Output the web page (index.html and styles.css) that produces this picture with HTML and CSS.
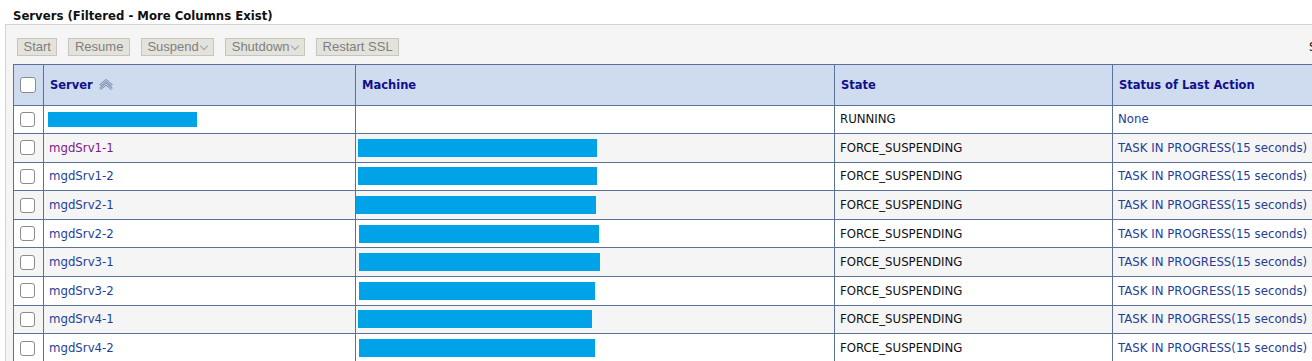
FILE: index.html
```html
<html><head>
<link rel="stylesheet" href="styles.css">
</head>
<body>
  <h2 class="title">Servers (Filtered - More Columns Exist)</h2>

  <div class="panel">
    <div class="toolbar">
      <div class="actions">
        <button class="btn" disabled>Start</button>
        <button class="btn" disabled>Resume</button>
        <button class="btn" disabled>Suspend <span class="caret"></span></button>
        <button class="btn" disabled>Shutdown <span class="caret"></span></button>
        <button class="btn" disabled>Restart SSL</button>
      </div>
      <div class="paging">Showing 1 to 9 of 9 &nbsp; Previous | Next</div>
    </div>

    <table class="grid">
      <colgroup>
        <col class="c-check">
        <col class="c-server">
        <col class="c-machine">
        <col class="c-state">
        <col class="c-status">
      </colgroup>
      <thead>
        <tr>
          <th class="check"><span class="cb cb-head"></span></th>
          <th>Server <svg class="sort" width="16" height="11" viewBox="0 0 16 11"><path d="M2 6.5 L8 1.5 L14 6.5" fill="none" stroke="#7b8db2" stroke-width="2.4"/><path d="M2 10 L8 5 L14 10" fill="none" stroke="#7b8db2" stroke-width="2.4"/><path d="M2 6.5 L8 1.5 L14 6.5" fill="none" stroke="#dde4f0" stroke-width="0.8"/><path d="M2 10 L8 5 L14 10" fill="none" stroke="#dde4f0" stroke-width="0.8"/></svg></th>
          <th>Machine</th>
          <th>State</th>
          <th>Status of Last Action</th>
        </tr>
      </thead>
      <tbody>
        <tr>
          <td class="check"><span class="cb"></span></td>
          <td class="server"><span class="mask mask-name"></span></td>
          <td class="machine"></td>
          <td class="state">RUNNING</td>
          <td class="status">None</td>
        </tr>
        <tr>
          <td class="check"><span class="cb"></span></td>
          <td class="server"><a class="visited">mgdSrv1-1</a></td>
          <td class="machine"><span class="mask" style="width:239px"></span></td>
          <td class="state">FORCE_SUSPENDING</td>
          <td class="status">TASK IN PROGRESS(15 seconds)</td>
        </tr>
        <tr>
          <td class="check"><span class="cb"></span></td>
          <td class="server"><a>mgdSrv1-2</a></td>
          <td class="machine"><span class="mask" style="width:239px"></span></td>
          <td class="state">FORCE_SUSPENDING</td>
          <td class="status">TASK IN PROGRESS(15 seconds)</td>
        </tr>
        <tr>
          <td class="check"><span class="cb"></span></td>
          <td class="server"><a>mgdSrv2-1</a></td>
          <td class="machine"><span class="mask" style="width:240px;margin-left:-2px"></span></td>
          <td class="state">FORCE_SUSPENDING</td>
          <td class="status">TASK IN PROGRESS(15 seconds)</td>
        </tr>
        <tr>
          <td class="check"><span class="cb"></span></td>
          <td class="server"><a>mgdSrv2-2</a></td>
          <td class="machine"><span class="mask" style="width:240px;margin-left:1px"></span></td>
          <td class="state">FORCE_SUSPENDING</td>
          <td class="status">TASK IN PROGRESS(15 seconds)</td>
        </tr>
        <tr>
          <td class="check"><span class="cb"></span></td>
          <td class="server"><a>mgdSrv3-1</a></td>
          <td class="machine"><span class="mask" style="width:241px;margin-left:1px"></span></td>
          <td class="state">FORCE_SUSPENDING</td>
          <td class="status">TASK IN PROGRESS(15 seconds)</td>
        </tr>
        <tr>
          <td class="check"><span class="cb"></span></td>
          <td class="server"><a>mgdSrv3-2</a></td>
          <td class="machine"><span class="mask" style="width:236px;margin-left:1px"></span></td>
          <td class="state">FORCE_SUSPENDING</td>
          <td class="status">TASK IN PROGRESS(15 seconds)</td>
        </tr>
        <tr>
          <td class="check"><span class="cb"></span></td>
          <td class="server"><a>mgdSrv4-1</a></td>
          <td class="machine"><span class="mask" style="width:234px"></span></td>
          <td class="state">FORCE_SUSPENDING</td>
          <td class="status">TASK IN PROGRESS(15 seconds)</td>
        </tr>
        <tr>
          <td class="check"><span class="cb"></span></td>
          <td class="server"><a>mgdSrv4-2</a></td>
          <td class="machine"><span class="mask" style="width:236px;margin-left:1px"></span></td>
          <td class="state">FORCE_SUSPENDING</td>
          <td class="status">TASK IN PROGRESS(15 seconds)</td>
        </tr>
      </tbody>
    </table>
  </div>
</body></html>
```

FILE: styles.css
```css
:root {
  --grid-line: #5b7198;
  --head-bg: #cfdbee;
  --head-text: #10108c;
  --link: #1d3f96;
  --visited: #7d1a86;
  --mask: #00a2e8;
  --panel-bg: #f5f5f5;
  --panel-line: #d3d3d3;
}

html, body {
  margin: 0;
  overflow: hidden;
  background: #ffffff;
}

body {
  font-family: "DejaVu Sans", Verdana, sans-serif;
  color: #111111;
}

.title {
  margin: 0;
  padding: 8px 0 0 13px;
  height: 16px;
  font-size: 11.7px;
  line-height: 16px;
  font-weight: bold;
  color: #111111;
  white-space: nowrap;
}

.panel {
  margin-left: 5px;
  width: 1600px;
  border-top: 1px solid var(--panel-line);
  border-left: 1px solid var(--panel-line);
  background: var(--panel-bg);
  padding: 13px 0 0 7px;
}

.toolbar {
  display: grid;
  grid-template-columns: 1292px auto;
  align-items: center;
  padding-left: 4px;
  margin-bottom: 8px;
}

.actions {
  display: flex;
  gap: 11px;
}

.btn {
  font-family: "Liberation Sans", Arial, sans-serif;
  font-size: 13px;
  line-height: 16px;
  height: 18px;
  padding: 0 5.5px;
  margin: 0;
  background: #e3e3dc;
  border: 1px solid #c6c6be;
  border-radius: 0;
  color: #7f7f7f;
  display: flex;
  align-items: center;
  gap: 1px;
}

.caret {
  display: inline-block;
  width: 5px;
  height: 5px;
  border-right: 1.5px solid #a0a0a0;
  border-bottom: 1.5px solid #a0a0a0;
  transform: rotate(45deg);
  margin: -3px 1px 0 1px;
}

.paging {
  font-size: 11.75px;
  color: #111111;
  white-space: nowrap;
}

.grid {
  border-collapse: collapse;
  table-layout: fixed;
  width: 1400px;
  background: #ffffff;
  border: 1px solid var(--grid-line);
}

.c-check { width: 30px; }
.c-server { width: 312px; }
.c-machine { width: 479px; }
.c-state { width: 278px; }
.c-status { width: 301px; }

.grid th,
.grid td {
  border: 1px solid var(--grid-line);
  text-align: left;
  vertical-align: middle;
  white-space: nowrap;
  overflow: hidden;
}

.grid th {
  height: 40.5px;
  padding: 0 0 0 6px;
  background: var(--head-bg);
  color: var(--head-text);
  font-size: 11.5px;
  font-weight: bold;
}

.grid td {
  height: 28.6px;
  padding: 0 0 0 5px;
  font-size: 11.75px;
  line-height: 14px;
}

.grid tbody tr:nth-child(even) td {
  background: var(--panel-bg);
}

.grid th.check,
.grid td.check {
  padding: 0 0 0 6px;
}

.cb {
  display: block;
  width: 15px;
  height: 15px;
  box-sizing: border-box;
  border: 1.5px solid #8c8c8c;
  border-radius: 3px;
  background: #ffffff;
}

.cb-head {
  width: 16px;
  height: 16px;
  margin-top: 1px;
}

.sort {
  vertical-align: -1px;
  margin-left: 1px;
}

.grid a {
  color: var(--link);
  text-decoration: none;
}

.grid a.visited {
  color: var(--visited);
}

.grid td.server {
  padding-left: 5px;
}

.grid td.machine {
  padding-left: 2px;
}

.state {
  color: #111111;
}

.status {
  color: var(--link);
}

.mask {
  display: block;
  height: 18px;
  background: var(--mask);
}

.mask-name {
  width: 149px;
  height: 15px;
  margin-left: -1px;
}
```
